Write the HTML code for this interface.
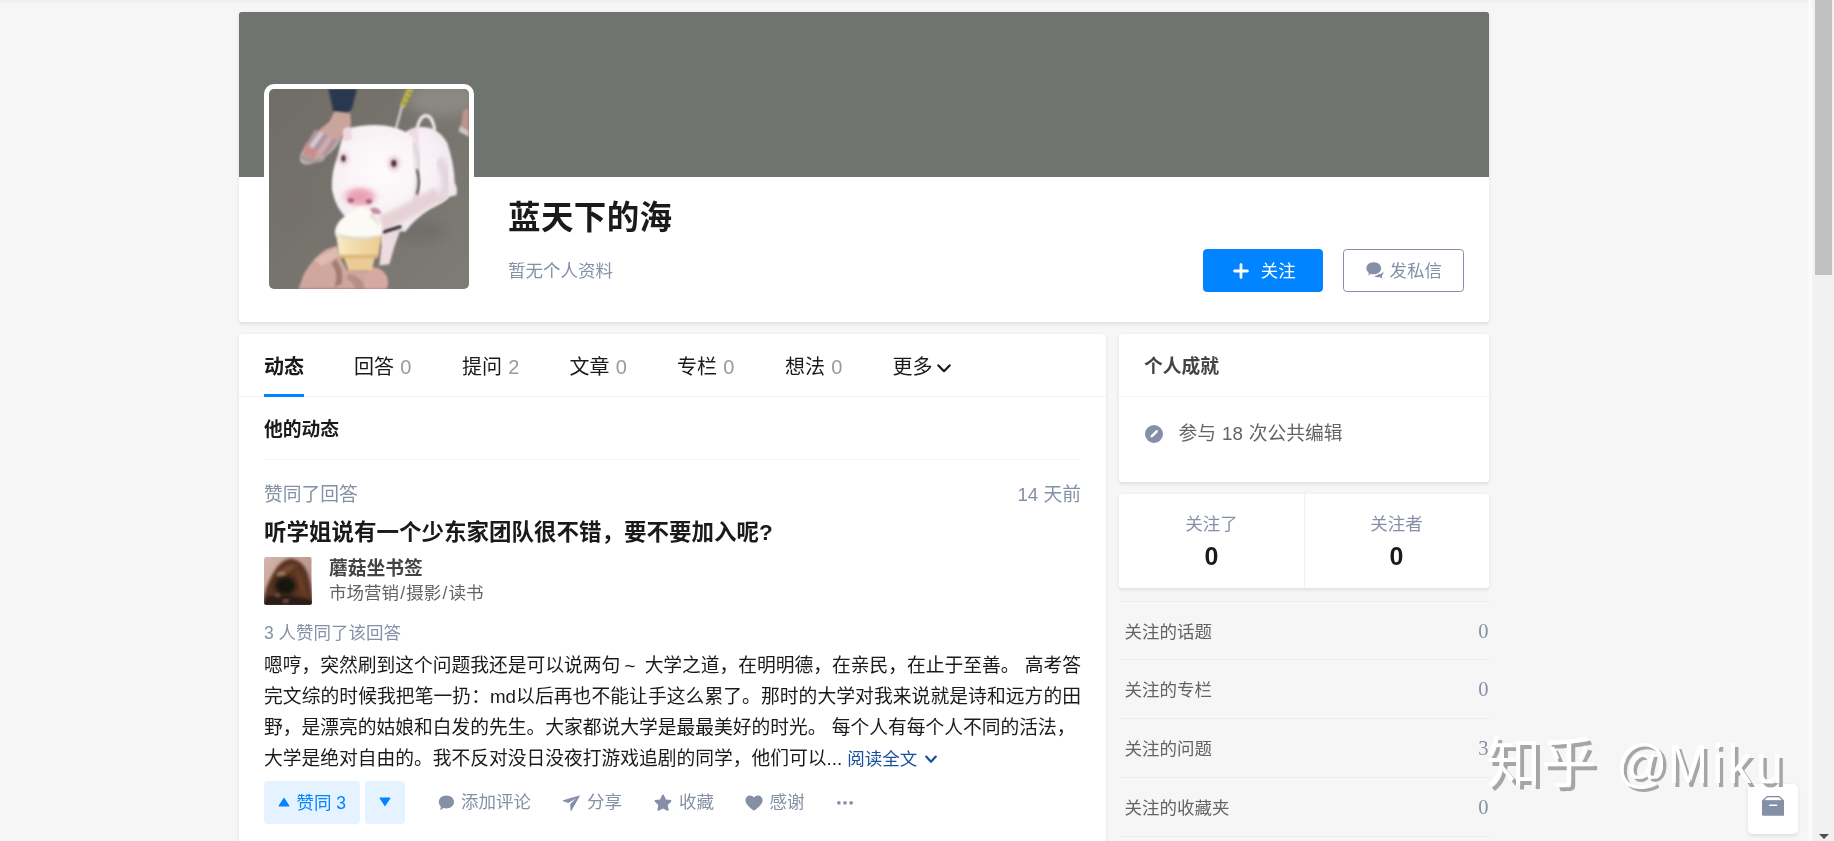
<!DOCTYPE html>
<html lang="zh-CN">
<head>
<meta charset="utf-8">
<title>蓝天下的海 - 知乎</title>
<style>
*{box-sizing:border-box;margin:0;padding:0}
html,body{width:1834px;height:841px;overflow:hidden;background:#f6f6f6}
body{position:relative;font-family:"Liberation Sans","Noto Sans CJK SC",sans-serif;color:#1a1a1a;will-change:transform}
.abs{position:absolute;white-space:nowrap}
.card{position:absolute;background:#fff;border-radius:2.5px;box-shadow:0 1.25px 3.75px rgba(26,26,26,.1)}
.topshade{position:absolute;left:0;top:0;width:1813px;height:4px;background:linear-gradient(#ededed,#f6f6f6)}
/* header */
#hdr{left:239px;top:12px;width:1250px;height:310px}
#cover{position:absolute;left:0;top:0;width:1250px;height:165px;background:#6f7471;border-radius:2.5px 2.5px 0 0}
#avatar{position:absolute;left:25px;top:72px;width:210px;height:210px;border-radius:10px;background:#fff;padding:5px}
#avatar svg{display:block;width:200px;height:200px;border-radius:5px}
#name{left:269px;top:184px;font-size:32.5px;line-height:44px;font-weight:700;color:#1a1a1a;letter-spacing:.4px}
#headline{left:269px;top:246px;font-size:17.5px;line-height:26px;color:#8590a6}
.btn{position:absolute;height:43px;border-radius:3.75px;font-size:17.5px;line-height:41px;text-align:center;white-space:nowrap}
#follow{left:964px;top:237px;width:120px;background:#0084ff;color:#fff;border:1.25px solid #0084ff}
#msg{left:1104px;top:237px;width:121px;background:#fff;color:#8590a6;border:1.25px solid #8590a6}
/* main */
#main{left:239px;top:334px;width:867px;height:520px}
.tab{position:absolute;top:2px;height:63px;line-height:63px;font-size:20px;color:#1a1a1a;white-space:nowrap}
.tab i{font-style:normal;color:#999;margin-left:6.25px}
.tab.on{font-weight:700}
#tabline{position:absolute;left:0;top:61.75px;width:867px;height:1.25px;background:#f3f3f3}
#tabbar{position:absolute;left:25px;top:59.5px;width:40px;height:3.75px;background:#0084ff}
.gray{color:#8590a6}

/* feed */
#sect{left:25px;top:81px;font-size:18.75px;line-height:30px;font-weight:700;color:#1a1a1a}
#sectline{position:absolute;left:25px;top:125px;width:817px;height:1.25px;background:#f6f6f6}
#meta{left:25px;top:145.5px;font-size:18.75px;line-height:30px;color:#8590a6}
#time{right:25px;top:145.5px;font-size:18.75px;line-height:30px;color:#8590a6}
#q{left:25px;top:183px;font-size:22.5px;line-height:32px;font-weight:700;color:#1a1a1a}
#aava{position:absolute;left:25px;top:223px;width:47.5px;height:47.5px;border-radius:2.5px;overflow:hidden}
#aava svg{display:block;width:47.5px;height:47.5px}
#aname{left:90px;top:220.5px;font-size:18.75px;line-height:28px;font-weight:700;color:#444}
#ahead{left:90px;top:246px;font-size:17.5px;line-height:26px;color:#646464}
#ahead i{font-style:normal;margin:0 1.2px}
#voters{left:25px;top:285.5px;font-size:17.5px;line-height:26px;color:#8590a6}
.ln{position:absolute;left:25px;width:817px;height:31px;font-size:18.75px;line-height:31px;color:#1a1a1a;white-space:nowrap}
.ln.j{text-align:justify;text-align-last:justify}
#more{color:#175199;font-size:17.5px}
.vote{position:absolute;top:447px;height:43px;border-radius:3.75px;background:#e5f2ff;color:#0084ff;font-size:17.5px;line-height:43px;white-space:nowrap}
.act{position:absolute;top:447px;height:43px;line-height:43px;font-size:17.5px;color:#8590a6;white-space:nowrap}
.vote svg{position:absolute}
.ic{position:absolute}

#achT{left:25px;top:18px;font-size:18.75px;line-height:30px;font-weight:700;color:#444}
#achL{position:absolute;left:0;top:61.75px;width:370px;height:1.25px;background:#f6f6f6}
#achI{position:absolute;left:25.9px;top:90.6px;width:18px;height:18px}
#achX{left:59.5px;top:85.25px;font-size:18.75px;line-height:30px;color:#646464;word-spacing:.8px}
.fc{position:absolute;top:0;width:185px;height:94px;text-align:center}
.fc span{position:absolute;left:0;width:100%;top:17px;font-size:17.5px;line-height:26px;color:#8590a6}
.fc strong{position:absolute;left:0;width:100%;top:45.5px;font-size:25px;line-height:32px;font-weight:700;color:#1a1a1a}
#fdiv{position:absolute;left:185px;top:0;width:1.25px;height:94px;background:#f0f0f0}
/* chrome */
#sbtrack{position:absolute;left:1813px;top:0;width:21px;height:841px;background:#f1f1f1}
#sbthumb{position:absolute;left:2px;top:0;width:17px;height:275px;background:#c1c1c1}
#sbarrow{position:absolute;left:6px;top:834px;width:0;height:0;border-left:5px solid transparent;border-right:5px solid transparent;border-top:5px solid #505050}
#wm{left:1486px;top:726.6px;width:310px;height:72px;font-size:55px;line-height:72px;color:#fff;text-shadow:3.9px 3.9px .6px #a6a6a6}
#wm{z-index:5}
#wm span{position:absolute;top:0;transform-origin:0 50%;white-space:pre}
#fab{position:absolute;left:1748px;top:784px;width:50px;height:50px;border-radius:5px;background:#fff;box-shadow:0 1.25px 3.75px rgba(26,26,26,.1)}
#fab svg{position:absolute;left:13.8px;top:12px;width:22.4px;height:20px}
/* side */
.li{position:absolute;left:1120px;width:368.5px;height:58px;border-top:1px solid #ebebeb;font-size:17.5px;line-height:60.5px;color:#646464}
.li span{position:absolute;left:4.5px;top:0}
.li b{position:absolute;right:0;top:-1.5px;font-weight:400;font-family:"Liberation Serif",serif;color:#8590a6;font-size:20.5px}
</style>
</head>
<body>
<div class="topshade"></div>

<!-- profile header -->
<div class="card" id="hdr">
  <div id="cover"></div>
  <div id="avatar"><!--PIG--><svg viewBox="20 20 801 801">
<defs>
<linearGradient id="flr" x1="0" y1="0" x2="1" y2="1"><stop offset="0" stop-color="#706d67"/><stop offset=".5" stop-color="#77746e"/><stop offset="1" stop-color="#7f7c76"/></linearGradient>
<radialGradient id="pigg" cx=".42" cy=".42" r=".75"><stop offset="0" stop-color="#fefcfd"/><stop offset=".6" stop-color="#f7f0f4"/><stop offset="1" stop-color="#e6dae1"/></radialGradient>
<radialGradient id="sn" cx=".5" cy=".5" r=".5"><stop offset="0" stop-color="#e898ad"/><stop offset=".55" stop-color="#eeb1c1"/><stop offset="1" stop-color="#f4e3ea" stop-opacity="0"/></radialGradient>
<linearGradient id="cn" x1="0" y1="0" x2="1" y2="0"><stop offset="0" stop-color="#f9ecca"/><stop offset=".35" stop-color="#f4ddae"/><stop offset="1" stop-color="#ebcb92"/></linearGradient>
<filter id="b1" x="-10%" y="-10%" width="120%" height="120%"><feGaussianBlur stdDeviation="3.2"/></filter>
<filter id="b2" x="-30%" y="-30%" width="160%" height="160%"><feGaussianBlur stdDeviation="9"/></filter>
<filter id="b3" x="-40%" y="-40%" width="180%" height="180%"><feGaussianBlur stdDeviation="26"/></filter>
<clipPath id="pc"><path d="M328 180 Q400 160 482 166 Q540 176 566 192 Q596 172 640 172 Q700 176 734 236 Q762 320 764 396 Q778 420 770 446 L744 452 Q722 474 664 502 Q604 540 566 592 L470 580 Q420 566 336 542 Q288 504 272 424 Q268 350 296 288 Q306 226 328 180 Z"/></clipPath>
</defs>
<rect x="20" y="20" width="801" height="801" fill="url(#flr)"/>
<ellipse cx="720" cy="60" rx="150" ry="70" fill="#8c8983" filter="url(#b3)"/>
<ellipse cx="620" cy="590" rx="110" ry="45" fill="#716e69" filter="url(#b3)"/>
<ellipse cx="110" cy="480" rx="90" ry="130" fill="#74716b" filter="url(#b3)"/>
<g filter="url(#b1)">
<!-- right edge foot -->
<path d="M798 104 L821 98 L821 205 L786 182 Z" fill="#bd958c"/>
<path d="M784 168 L821 188 L821 212 L780 190 Z" fill="#cfc6c6"/>
<!-- jeans, ankle, sandal -->
<path d="M258 20 L372 20 L352 100 L334 116 L278 112 Z" fill="#2a3750"/>
<ellipse cx="226" cy="252" rx="100" ry="44" transform="rotate(-38 226 252)" fill="#b9afb0"/>
<path d="M282 110 L346 118 L348 165 L305 218 L236 288 Q190 305 160 285 Q145 262 178 228 Q215 185 262 150 Z" fill="#caa59c"/>
<path d="M160 285 Q150 262 178 230 L215 262 L200 300 Z" fill="#c88f8c"/>
<path d="M204 182 L296 226 L246 290 L170 240 Z" fill="#b3939b"/>
<path d="M222 190 L240 198 L196 258 L180 248 Z" fill="#cfcbd1"/>
<path d="M258 206 L276 216 L232 280 L214 270 Z" fill="#cbaeb3"/>
<path d="M150 280 Q190 312 248 292 L236 310 Q185 326 146 298 Z" fill="#a69b9c"/>
<!-- leash -->
<path d="M572 20 L600 20 L563 96 L543 88 Z" fill="#bcb44b"/>
<path d="M578 34 L590 38 M568 54 L580 58 M558 74 L570 78" stroke="#6f6d2c" stroke-width="5"/>
<path d="M551 94 L541 132 L526 186" stroke="#cdcdcd" stroke-width="10" fill="none" stroke-linecap="round"/>
<!-- tail -->
<path d="M613 180 C 622 118, 668 100, 683 180" stroke="#f0e7ec" stroke-width="13" fill="none" stroke-linecap="round"/>
<!-- front leg -->
<path d="M462 575 L548 580 L522 652 L502 722 L462 727 L470 650 Z" fill="#ecdcdf"/>
<!-- body + head -->
<path d="M328 180 Q400 160 482 166 Q540 176 566 192 Q596 172 640 172 Q700 176 734 236 Q762 320 764 396 Q778 420 770 446 L744 452 Q722 474 664 502 Q604 540 566 592 L470 580 Q420 566 336 542 Q288 504 272 424 Q268 350 296 288 Q306 226 328 180 Z" fill="url(#pigg)"/>
<!-- ears -->
<path d="M316 184 Q330 168 350 174 L352 222 L318 230 Z" fill="#efd9e0"/>
<path d="M574 196 Q592 170 618 172 Q622 210 616 236 Z" fill="#f0dde4"/>
</g>
<!-- head/body separation shading -->
<g clip-path="url(#pc)"><path d="M600 230 Q640 360 600 500" stroke="#dccdd6" stroke-width="20" fill="none" filter="url(#b2)"/><path d="M330 545 Q420 585 560 600" stroke="#d6c8d0" stroke-width="22" fill="none" filter="url(#b2)"/><path d="M700 300 Q760 400 700 480" stroke="#e3d6dd" stroke-width="40" fill="none" filter="url(#b2)"/><path d="M470 560 Q560 520 700 440" stroke="#e6d2d6" stroke-width="60" fill="none" filter="url(#b2)"/></g>
<ellipse cx="384" cy="452" rx="86" ry="52" fill="url(#sn)" filter="url(#b1)"/>
<ellipse cx="318" cy="298" rx="20" ry="24" fill="#e6c4d0" filter="url(#b2)"/>
<ellipse cx="520" cy="318" rx="24" ry="28" fill="#e6c4d0" filter="url(#b2)"/>
<g filter="url(#b1)">
<ellipse cx="318" cy="298" rx="8" ry="13" fill="#463540"/>
<ellipse cx="520" cy="318" rx="10.5" ry="14" fill="#463540"/>
<ellipse cx="348" cy="466" rx="13" ry="10" fill="#a5687a"/>
<ellipse cx="420" cy="470" rx="13" ry="10" fill="#a5687a"/>
<path d="M424 498 Q462 488 470 520 L436 520 Z" fill="#c48b9b"/>
<path d="M612 342 Q628 392 612 442" stroke="#2b2527" stroke-width="6.5" fill="none"/>
<path d="M478 593 L545 572" stroke="#1f1c1d" stroke-width="12" stroke-linecap="round"/>
<!-- hand -->
<path d="M138 821 L160 760 Q200 690 252 660 L292 648 L304 692 L332 746 L430 748 Q484 760 498 792 L490 821 Z" fill="#cfa79c"/>
<path d="M200 702 L290 652 L298 690 L232 730 Z" fill="#dfbbb0"/>
<path d="M286 700 Q322 742 312 800 L282 816 Q300 752 270 722 Z" fill="#a57b73"/>
<path d="M340 760 Q392 772 410 821 L366 821 Q356 790 330 780 Z" fill="#b98f85"/>
<path d="M400 821 Q396 760 430 735 Q470 730 492 770 Q500 800 492 821 Z" fill="#d6a9a1"/>
<!-- cone -->
<path d="M288 598 L472 598 L458 690 L302 690 Z" fill="url(#cn)"/>
<path d="M318 690 L445 690 L432 746 L338 746 Z" fill="#ebcc96"/>
<path d="M302 684 L458 684 L456 698 L304 698 Z" fill="#ddb678"/>
<!-- ice cream -->
<path d="M392 490 Q440 512 466 556 Q480 590 470 606 Q380 632 286 608 Q276 580 306 544 Q346 506 392 490 Z" fill="#fcfaf4"/>
<path d="M284 592 Q300 622 380 626 Q440 624 472 600 Q440 614 380 612 Q310 610 284 592 Z" fill="#e2dac8"/>
<path d="M430 516 Q462 540 460 574 Q448 548 420 532 Z" fill="#e9e3d6"/>
</g>
</svg><!--/PIG--></div>
  <h1 class="abs" id="name">蓝天下的海</h1>
  <div class="abs" id="headline">暂无个人资料</div>
  <div class="btn" id="follow"><svg style="position:absolute;left:28.5px;top:12.5px" width="16" height="16" viewBox="0 0 16 16"><path d="M8 1.6v12.8M1.6 8h12.8" stroke="#fff" stroke-width="2.8" stroke-linecap="round"/></svg><span style="position:absolute;left:56.75px;top:1px">关注</span></div>
  <div class="btn" id="msg"><svg style="position:absolute;left:21px;top:11px" width="20" height="19" viewBox="0 0 19 18"><path d="M13.2 12.6c1.5 0 3.4-.9 4.3-2.6.2 1.6-.4 3-1.5 4 .0 1 .3 1.9.8 2.7-1.1-.2-2-.8-2.7-1.5-1.8.5-3.9.2-5.4-.9 1.6-.1 3.2-.7 4.5-1.7z" fill="#8590a6"/><path d="M8.3.8c4.1 0 7.4 2.7 7.4 6.1S12.4 13 8.3 13c-1 0-2-.2-2.9-.5-.8.8-1.9 1.5-3.1 1.8.6-.9.9-2 .8-3.1C1.7 10.1.9 8.6.9 6.9.9 3.5 4.2.8 8.3.8z" fill="#8590a6" stroke="#fff" stroke-width=".9"/></svg><span style="position:absolute;left:45.5px;top:1px">发私信</span></div>
</div>

<!-- main column -->
<div class="card" id="main">
  <div class="tab on" style="left:25px">动态</div>
  <div class="tab" style="left:115px">回答<i>0</i></div>
  <div class="tab" style="left:223px">提问<i>2</i></div>
  <div class="tab" style="left:330.5px">文章<i>0</i></div>
  <div class="tab" style="left:438px">专栏<i>0</i></div>
  <div class="tab" style="left:546px">想法<i>0</i></div>
  <div class="tab" style="left:653.5px">更多<svg style="position:absolute;left:44px;top:27.5px" width="14" height="9" viewBox="0 0 14 9"><path d="M1.4 1.4 7 7.2l5.6-5.8" fill="none" stroke="#1a1a1a" stroke-width="2.2" stroke-linecap="round" stroke-linejoin="round"/></svg></div>
  <div id="tabline"></div><div id="tabbar"></div>

  <h2 class="abs" id="sect">他的动态</h2>
  <div id="sectline"></div>
  <div class="abs" id="meta">赞同了回答</div>
  <div class="abs" id="time">14 天前</div>
  <h3 class="abs" id="q">听学姐说有一个少东家团队很不错，要不要加入呢?</h3>
  <div id="aava"><!--AV--><svg viewBox="0 0 48 48">
<defs><filter id="ab" x="-20%" y="-20%" width="140%" height="140%"><feGaussianBlur stdDeviation="1.5"/></filter>
<filter id="ab2" x="-30%" y="-30%" width="160%" height="160%"><feGaussianBlur stdDeviation="2.4"/></filter>
<linearGradient id="abg" x1="0" y1="0" x2="1" y2=".6"><stop offset="0" stop-color="#d3b6ae"/><stop offset="1" stop-color="#b59187"/></linearGradient></defs>
<rect width="48" height="48" fill="url(#abg)"/>
<g filter="url(#ab)">
<path d="M-2 50 Q1 30 9 17 Q16 3 27 1.5 Q39 3 44 16 Q48 28 50 50 Z" fill="#5a3423"/>
<path d="M14 17 Q22 6 34 9 Q27 11 21 19 Z" fill="#7b4b31"/>
<path d="M32 12 Q42 20 42 42 L35 30 Z" fill="#6a3d28"/>
<path d="M-2 50 L3 40 Q24 36 50 44 L50 50 Z" fill="#2b1a13"/>
<ellipse cx="17.5" cy="17.5" rx="4.2" ry="2" fill="#ad8872"/>
<ellipse cx="14" cy="38.5" rx="2.5" ry="1.5" fill="#8a6a5c"/>
<ellipse cx="22" cy="44.5" rx="3" ry="1.3" fill="#7d5e51"/>
</g>
<ellipse cx="21.5" cy="29" rx="10.5" ry="9.5" fill="#18120f" filter="url(#ab2)"/>
</svg><!--/AV--></div>
  <div class="abs" id="aname">蘑菇坐书签</div>
  <div class="abs" id="ahead">市场营销<i>/</i>摄影<i>/</i>读书</div>
  <div class="abs" id="voters">3 人赞同了该回答</div>
  <p class="ln j" style="top:316px">嗯哼，突然刷到这个问题我还是可以说两句<span style="margin:0 4px 0 -1px"> ~ </span>大学之道，在明明德，在亲民，在止于至善。 高考答</p>
  <p class="ln j" style="top:347px">完文综的时候我把笔一扔：md以后再也不能让手这么累了。那时的大学对我来说就是诗和远方的田</p>
  <p class="ln" style="top:378px">野，是漂亮的姑娘和白发的先生。大家都说大学是最最美好的时光。 每个人有每个人不同的活法，</p>
  <p class="ln" style="top:409px">大学是绝对自由的。我不反对没日没夜打游戏追剧的同学，他们可以... <span id="more">阅读全文</span><svg style="position:absolute;left:661px;top:11.5px" width="12" height="9" viewBox="0 0 12 9"><path d="M1.2 1.6 6 6.8l4.8-5.2" fill="none" stroke="#175199" stroke-width="2.2" stroke-linecap="round" stroke-linejoin="round"/></svg></p>
  <div class="vote" style="left:25px;width:96px"><svg style="left:13.5px;top:16px" width="12" height="10" viewBox="0 0 12 10"><path d="M6 .6 11.3 8.4a.6.6 0 0 1-.5 1H1.2a.6.6 0 0 1-.5-1z" fill="#0084ff"/></svg><span style="position:absolute;left:32.5px;top:.5px">赞同 3</span></div>
  <div class="vote" style="left:126.25px;width:39.5px"><svg style="left:13.75px;top:16px" width="12" height="10" viewBox="0 0 12 10"><path d="M6 9.4.7 1.6a.6.6 0 0 1 .5-1h9.6a.6.6 0 0 1 .5 1z" fill="#0084ff"/></svg></div>
  <svg class="ic" style="left:198.5px;top:460.5px" width="16.5" height="16" viewBox="0 0 16.5 16"><path d="M8.4.6C12.7.6 16 3.4 16 7s-3.3 6.4-7.6 6.4c-1.1 0-2.2-.2-3.1-.5-.9.8-2 1.6-3.3 2 .6-1 .9-2.2.8-3.4C1.5 10.3.8 8.7.8 7 .8 3.4 4.1.6 8.4.6z" fill="#8590a6"/></svg>
  <div class="act" style="left:222px">添加评论</div>
  <svg class="ic" style="left:323px;top:460.5px" width="18.5" height="17" viewBox="0 0 18.5 17"><path d="M17.8.9c.2-.3-.1-.6-.4-.5L1.1 5.3c-.5.1-.5.8 0 1l5.2 1.6L14 3.2 8.2 9.1l.3 6.3c0 .5.6.7.9.3z" fill="#8590a6"/></svg>
  <div class="act" style="left:348px">分享</div>
  <svg class="ic" style="left:414.5px;top:459.5px" width="18" height="17" viewBox="0 0 18 17"><path d="M9 .5c.4 0 .7.2.9.6l2 4.3 4.6.6c.9.1 1.2 1.1.6 1.7l-3.4 3.3.9 4.6c.2.9-.7 1.5-1.4 1.1L9 14.4l-4.2 2.3c-.7.4-1.6-.2-1.4-1.1l.9-4.6L.9 7.7C.3 7.1.6 6.1 1.5 6l4.6-.6 2-4.3C8.3.7 8.6.5 9 .5z" fill="#8590a6"/></svg>
  <div class="act" style="left:440px">收藏</div>
  <svg class="ic" style="left:505.5px;top:460.5px" width="18" height="16" viewBox="0 0 18 16"><path d="M9 15.6C6.5 13.9.4 9.8.4 5.2.4 2.5 2.5.4 5 .4c1.6 0 3.1.8 4 2.1.9-1.3 2.4-2.1 4-2.1 2.5 0 4.6 2.1 4.6 4.8 0 4.6-6.1 8.7-8.6 10.4z" fill="#8590a6"/></svg>
  <div class="act" style="left:530.5px">感谢</div>
  <svg class="ic" style="left:597.5px;top:466.5px" width="16" height="4" viewBox="0 0 16 4"><rect x=".2" y=".2" width="3.4" height="3.4" rx=".8" fill="#8590a6"/><rect x="6.3" y=".2" width="3.4" height="3.4" rx=".8" fill="#8590a6"/><rect x="12.4" y=".2" width="3.4" height="3.4" rx=".8" fill="#8590a6"/></svg>
</div>

<!-- sidebar -->
<div class="card" id="ach" style="left:1119px;top:334px;width:370px;height:148px">
  <div class="abs" id="achT">个人成就</div>
  <div id="achL"></div>
  <svg id="achI" viewBox="0 0 24 24"><circle cx="12" cy="12" r="12" fill="#8590a6"/><path d="M7.2 16.8l.9-3.3 6.6-6.6a1 1 0 0 1 1.4 0l1 1a1 1 0 0 1 0 1.4l-6.6 6.6z" fill="#fff"/></svg>
  <div class="abs" id="achX">参与 18 次公共编辑</div>
</div>
<div class="card" id="fol" style="left:1119px;top:494px;width:370px;height:94px">
  <div class="fc" style="left:0"><span>关注了</span><strong>0</strong></div>
  <div id="fdiv"></div>
  <div class="fc" style="left:185px"><span>关注者</span><strong>0</strong></div>
</div>

<div class="li" style="top:601px"><span>关注的话题</span><b>0</b></div>
<div class="li" style="top:659px"><span>关注的专栏</span><b>0</b></div>
<div class="li" style="top:718px"><span>关注的问题</span><b>3</b></div>
<div class="li" style="top:777px"><span>关注的收藏夹</span><b>0</b></div>
<div class="li" style="top:836px"></div>

<div class="abs" id="wm"><span style="left:0">知乎 </span><span style="left:129.5px;transform:scale(.92,.93)">@</span><span style="left:182px;top:1px;transform:scaleX(.87);letter-spacing:5.2px">Miku</span></div>
<div id="fab"><svg viewBox="0 0 22.4 20"><path d="M.7 5 4.6 1.1A1.8 1.8 0 0 1 5.9.6h10.6a1.8 1.8 0 0 1 1.3.5L21.7 5z" fill="#fff" stroke="#7d88a0" stroke-width="1.3" stroke-linejoin="round"/><path d="M0 4.7h22.4v13.5a1.6 1.6 0 0 1-1.6 1.6H1.6A1.6 1.6 0 0 1 0 18.2z" fill="#8590a6"/><rect x="7.2" y="8.5" width="8" height="1.4" rx=".5" fill="#fff"/></svg></div>
<div style="position:absolute;left:1808px;top:0;width:4px;height:841px;background:#fafafa"></div>
<div id="sbtrack"><div id="sbthumb"></div><div id="sbarrow"></div></div>
</body>
</html>
